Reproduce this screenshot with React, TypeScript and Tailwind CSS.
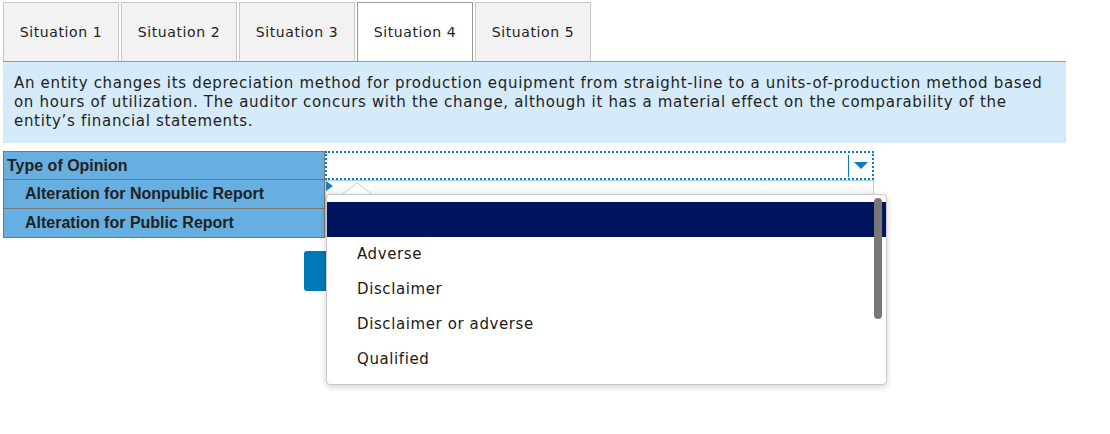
import React from "react";

const tabs = ["Situation 1", "Situation 2", "Situation 3", "Situation 4", "Situation 5"];
const rows = [
  { label: "Type of Opinion", indent: false },
  { label: "Alteration for Nonpublic Report", indent: true },
  { label: "Alteration for Public Report", indent: true },
];
const options = ["", "Adverse", "Disclaimer", "Disclaimer or adverse", "Qualified"];

export default function App() {
  const active = 3;

  return (
    <div className="relative w-[1110px] h-[434px] bg-white pl-[3px] pt-[2px] font-['DejaVu_Sans',sans-serif] text-[#222]">
      {/* tabs */}
      <div className="flex gap-[2px] w-[1063px] border-b border-[#999]">
        {tabs.map((t, i) => (
          <div
            key={t}
            className={
              i === active
                ? "w-[116px] h-[59px] flex items-center justify-center text-[14px] tracking-[0.6px] bg-white border border-b-0 border-[#999]"
                : "w-[116px] h-[59px] flex items-center justify-center text-[14px] tracking-[0.6px] bg-[#f2f2f2] border border-b-0 border-[#c8c8c8]"
            }
          >
            {t}
          </div>
        ))}
      </div>

      {/* situation text */}
      <div className="w-[1063px] bg-[#d5ebf9] px-[11px] py-3 text-[15px] leading-[19px] tracking-[0.68px] text-[#222]">
        An entity changes its depreciation method for production equipment from straight-line to a units-of-production method based on
        hours of utilization. The auditor concurs with the change, although it has a material effect on the comparability of the entity’s
        financial statements.
      </div>

      {/* answer table */}
      <div className="mt-2 flex flex-col">
        {rows.map((r, i) => (
          <div key={r.label} className="flex h-[29px]">
            <div
              className={
                "w-[322px] bg-[#66afe0] border-x border-b border-[#777] flex items-center font-['Liberation_Sans',sans-serif] font-bold text-[16px] text-[#222] " +
                (i === 0 ? "border-t pl-[3px]" : "pl-[21px]")
              }
            >
              {r.label}
            </div>
            {i === 0 ? (
              <div className="w-[549px] h-[29px] border-2 border-dotted border-[#0a7cc0] bg-white flex justify-end items-center">
                <div className="h-[22px] border-l border-[#0a7cc0] w-[24px] flex items-center justify-center">
                  <div className="w-0 h-0 border-l-[7px] border-r-[7px] border-t-[7px] border-l-transparent border-r-transparent border-t-[#0a7cc0]" />
                </div>
              </div>
            ) : (
              <div className="w-[549px] h-[29px] border border-[#a9d3ee] bg-gradient-to-b from-white to-[#ececec]" />
            )}
          </div>
        ))}
      </div>

      <button className="mt-[13px] ml-[301px] w-[120px] h-[40px] rounded-[3px] bg-[#0077b6] text-white text-[15px]">
        Submit
      </button>

      {/* small marker triangle */}
      <div className="absolute left-[326px] top-[181px] w-0 h-0 border-t-[5px] border-b-[5px] border-l-[7px] border-t-transparent border-b-transparent border-l-[#1a7cc0]" />

      {/* popup notch */}
      <svg className="absolute left-[342px] top-[182px]" width="30" height="13" viewBox="0 0 30 13">
        <path d="M0 13 L15 1 L30 13 Z" fill="#fff" />
        <path d="M0 12.5 L15 1 L30 12.5" fill="none" stroke="#d0d0d0" strokeWidth="1" />
      </svg>

      {/* dropdown list */}
      <div className="absolute left-[326px] top-[194px] w-[561px] h-[191px] bg-white border border-[#c8c8c8] rounded-[4px] shadow-[0_2px_6px_rgba(0,0,0,0.18)] py-[7px] overflow-hidden">
        {options.map((o, i) => (
          <div
            key={i}
            className={
              "h-[35px] flex items-center pl-[30px] text-[15px] tracking-[0.6px] font-['DejaVu_Sans',sans-serif] " +
              (i === 0 ? "bg-[#001560] text-white" : "text-[#1a1a1a]")
            }
          >
            {o}
          </div>
        ))}
        <div className="absolute right-[4px] top-[3px] w-[8px] h-[121px] rounded-full bg-[#777]" />
      </div>
    </div>
  );
}
